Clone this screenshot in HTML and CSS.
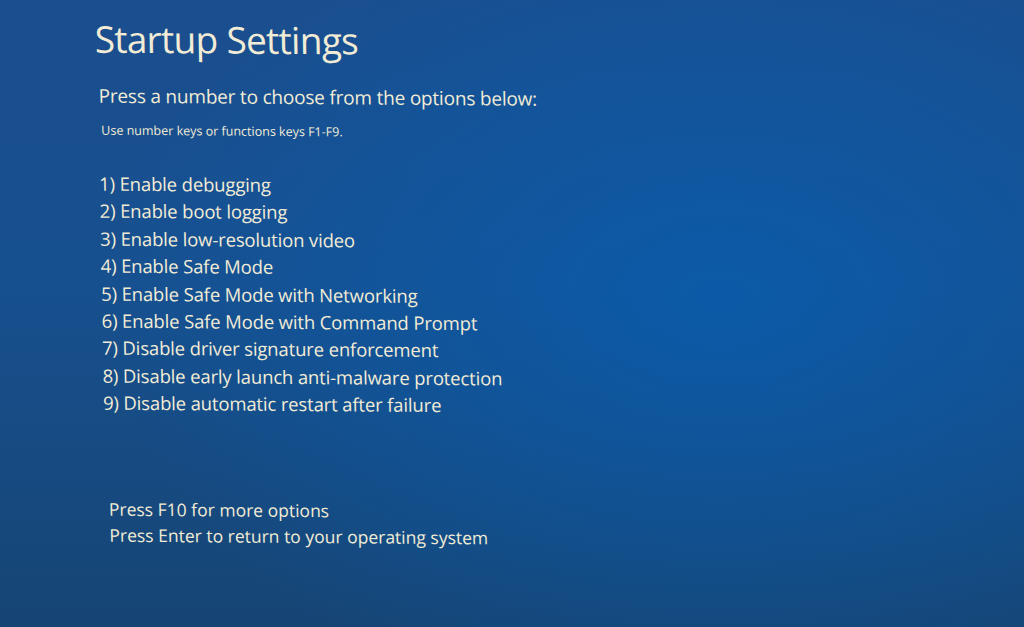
FILE: index.html
```html
<!DOCTYPE html>
<html lang="en">
<head>
<meta charset="utf-8">
<title>Startup Settings</title>
<link rel="stylesheet" href="styles.css">
</head>
<body>
<main class="screen">
  <div class="content">
    <h1 class="title">Startup Settings</h1>
    <p class="lead">Press a number to choose from the options below:</p>
    <p class="hint">Use number keys or functions keys F1-F9.</p>
    <ol class="options">
      <li>1) Enable debugging</li>
      <li>2) Enable boot logging</li>
      <li>3) Enable low-resolution video</li>
      <li>4) Enable Safe Mode</li>
      <li>5) Enable Safe Mode with Networking</li>
      <li>6) Enable Safe Mode with Command Prompt</li>
      <li>7) Disable driver signature enforcement</li>
      <li>8) Disable early launch anti-malware protection</li>
      <li>9) Disable automatic restart after failure</li>
    </ol>
    <div class="footer">
      <p>Press F10 for more options</p>
      <p>Press Enter to return to your operating system</p>
    </div>
  </div>
</main>
</body>
</html>
```
FILE: styles.css
```css
html, body {
  margin: 0;
  padding: 0;
  height: 100%;
}
body {
  background: #174a86;
  overflow: hidden;
}
.screen {
  width: 1024px;
  height: 627px;
  background:
    radial-gradient(ellipse 620px 420px at 720px 300px, rgba(10, 92, 172, 0.85), rgba(10, 92, 172, 0) 100%),
    linear-gradient(180deg, #1b4e8e 0%, #17508f 45%, #164574 100%);
  font-family: "Open Sans", "Noto Sans", sans-serif;
  color: #f2ecd6;
}
.content {
  padding: 14px 0 0 94px;
  transform-origin: 0 0;
  transform: skewX(1.4deg) rotate(0.4deg);
}
.title {
  margin: 0;
  font-size: 37px;
  font-weight: 400;
  line-height: 48px;
  letter-spacing: -0.7px;
}
.lead {
  margin: 20px 0 0 3px;
  font-size: 19px;
  line-height: 26px;
  letter-spacing: -0.2px;
}
.hint {
  margin: 13px 0 0 5px;
  font-size: 12.5px;
  line-height: 18px;
}
.options {
  list-style: none;
  margin: 30px 0 0 2px;
  padding: 0;
  font-size: 18.5px;
  line-height: 27.4px;
  letter-spacing: -0.15px;
}
.footer {
  margin: 79px 0 0 6px;
  font-size: 17.5px;
  line-height: 26px;
}
.footer p {
  margin: 0;
}
```
